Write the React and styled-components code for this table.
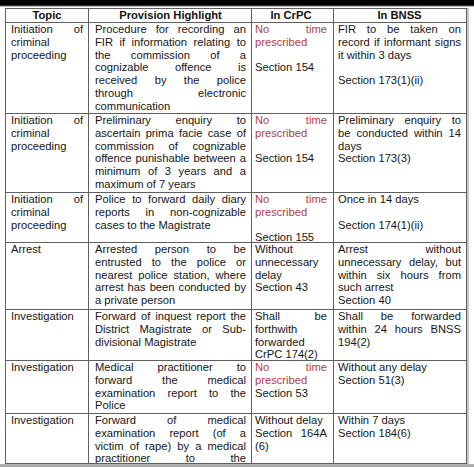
import styled, { createGlobalStyle } from "styled-components";

const GlobalStyle = createGlobalStyle`
  html, body {
    margin: 0;
    padding: 0;
    background: #fff;
  }
  body {
    font-family: "Liberation Sans", Arial, sans-serif;
    width: 474px;
    height: 467px;
    overflow: hidden;
  }
`;

const Page = styled.div`
  display: flex;
  flex-direction: column;
  width: 474px;
  height: 467px;
  overflow: hidden;
`;

const TopShade = styled.div`
  flex: none;
  height: 7px;
  background: linear-gradient(#000 0 5px, #6f6f6f 6px, #fff 7px);
`;

const Table = styled.div`
  flex: none;
  display: grid;
  grid-template-columns: 83px 163px 82px 133px;
  grid-template-rows: 14px 91px 79px 50px 67px 51px 53px 50px;
  width: max-content;
  margin: 1px 0 0 5px;
  border-top: 1px solid #5f5f5f;
  border-left: 1px solid #5f5f5f;
  box-shadow: 2px 0 0 #c8c8c8;
  font-size: 11.2px;
  line-height: 12.8px;
  color: #151515;
`;

const pads = [
  [5, 5],
  [6, 5],
  [3, 6],
  [4, 5],
];

const Cell = styled.div`
  box-sizing: border-box;
  border-right: 1px solid #5f5f5f;
  border-bottom: 1px solid #5f5f5f;
  padding: 0 ${(p) => pads[p.$col][1]}px 0 ${(p) => pads[p.$col][0]}px;
  overflow: hidden;
`;

const HeadCell = styled(Cell)`
  text-align: center;
  font-weight: bold;
  line-height: 13px;
  color: #111;
`;

const Line = styled.span`
  display: block;
  min-height: 12.8px;
  text-align: ${(p) => (p.$fill ? "justify" : "left")};
  text-align-last: ${(p) => (p.$fill ? "justify" : "left")};
  color: ${(p) => (p.$red ? "#b3403d" : "inherit")};
`;

const BottomEdge = styled.div`
  flex: none;
  height: 4px;
  background: linear-gradient(#b4b4b4, #9c9c9c);
`;

// each cell: list of paragraphs; paragraph = { lines, red }, all lines but the last are justified
const P = (lines, red = false) => ({ lines, red });
const BLANK = P([""]);

const heads = ["Topic", "Provision Highlight", "In CrPC", "In BNSS"];

const initiation = [P(["Initiation of", "criminal", "proceeding"])];
const noTime = P(["No time", "prescribed"], true);

const rows = [
  [
    initiation,
    [
      P([
        "Procedure for recording an",
        "FIR if information relating to",
        "the commission of a",
        "cognizable offence is",
        "received by the police",
        "through electronic",
        "communication",
      ]),
    ],
    [noTime, BLANK, P(["Section 154"])],
    [
      P(["FIR to be taken on", "record if informant signs", "it within 3 days"]),
      BLANK,
      P(["Section 173(1)(ii)"]),
    ],
  ],
  [
    initiation,
    [
      P([
        "Preliminary enquiry to",
        "ascertain prima facie case of",
        "commission of cognizable",
        "offence punishable between a",
        "minimum of 3 years and a",
        "maximum of 7 years",
      ]),
    ],
    [noTime, BLANK, P(["Section 154"])],
    [P(["Preliminary enquiry to", "be conducted within 14", "days"]), P(["Section 173(3)"])],
  ],
  [
    initiation,
    [P(["Police to forward daily diary", "reports in non-cognizable", "cases to the Magistrate"])],
    [noTime, BLANK, P(["Section 155"])],
    [P(["Once in 14 days"]), BLANK, P(["Section 174(1)(ii)"])],
  ],
  [
    [P(["Arrest"])],
    [
      P([
        "Arrested person to be",
        "entrusted to the police or",
        "nearest police station, where",
        "arrest has been conducted by",
        "a private person",
      ]),
    ],
    [P(["Without"]), P(["unnecessary"]), P(["delay"]), P(["Section 43"])],
    [
      P(["Arrest without", "unnecessary delay, but", "within six hours from", "such arrest"]),
      P(["Section 40"]),
    ],
  ],
  [
    [P(["Investigation"])],
    [P(["Forward of inquest report the", "District Magistrate or Sub-", "divisional Magistrate"])],
    [P(["Shall be", "forthwith"]), P(["forwarded"]), P(["CrPC 174(2)"])],
    [P(["Shall be forwarded", "within 24 hours BNSS", "194(2)"])],
  ],
  [
    [P(["Investigation"])],
    [P(["Medical practitioner to", "forward the medical", "examination report to the", "Police"])],
    [noTime, P(["Section 53"])],
    [P(["Without any delay"]), P(["Section 51(3)"])],
  ],
  [
    [P(["Investigation"])],
    [
      P([
        "Forward of medical",
        "examination report (of a",
        "victim of rape) by a medical",
        "practitioner to the",
        "",
      ]),
    ],
    [P(["Without delay"]), P(["Section 164A", "(6)"])],
    [P(["Within 7 days"]), P(["Section 184(6)"])],
  ],
];

const CellText = ({ paras }) =>
  paras.map((para, pi) =>
    para.lines.map((text, li) => (
      <Line key={`${pi}-${li}`} $red={para.red} $fill={li < para.lines.length - 1}>
        {text}
      </Line>
    ))
  );

export default function App() {
  return (
    <Page>
      <GlobalStyle />
      <TopShade />
      <Table>
        {heads.map((h, i) => (
          <HeadCell key={h} $col={i}>
            {h}
          </HeadCell>
        ))}
        {rows.map((row, ri) =>
          row.map((paras, ci) => (
            <Cell key={`${ri}-${ci}`} $col={ci}>
              <CellText paras={paras} />
            </Cell>
          ))
        )}
      </Table>
      <BottomEdge />
    </Page>
  );
}
